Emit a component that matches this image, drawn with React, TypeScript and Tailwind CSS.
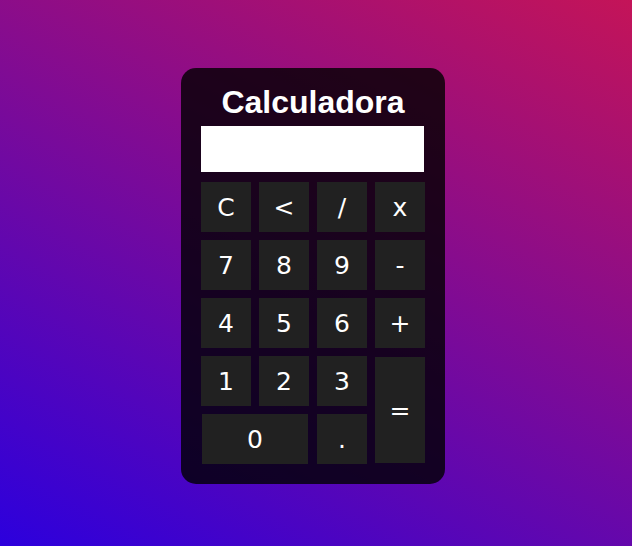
import React, { useState } from "react";

const keys: { label: string; cls?: string }[] = [
  { label: "C" },
  { label: "<" },
  { label: "/" },
  { label: "x" },
  { label: "7" },
  { label: "8" },
  { label: "9" },
  { label: "-" },
  { label: "4" },
  { label: "5" },
  { label: "6" },
  { label: "+" },
  { label: "1" },
  { label: "2" },
  { label: "3" },
  { label: "=", cls: "row-span-2 h-[106px] self-center" },
  { label: "0", cls: "col-span-2 w-[106px] justify-self-center" },
  { label: "." },
];

const App = () => {
  const [value, setValue] = useState("");

  const press = (k: string) => {
    if (k === "C") return setValue("");
    if (k === "<") return setValue((v) => v.slice(0, -1));
    if (k === "=") {
      try {
        // eslint-disable-next-line no-new-func
        const r = Function(`return (${value.replace(/x/g, "*")})`)();
        setValue(String(r));
      } catch {
        setValue("Erro");
      }
      return;
    }
    setValue((v) => v + k);
  };

  return (
    <div className="min-h-screen w-full bg-[linear-gradient(27deg,#2c00dd,#c41458)] flex items-center justify-center pt-[6px] pr-[6px]">
      <div className="w-[264px] rounded-[15px] bg-black/80 px-5 pt-5 pb-5 flex flex-col items-center">
        <h1 className="text-[32px] leading-[28px] font-bold text-white font-['Liberation_Sans',Arial,sans-serif]">
          Calculadora
        </h1>
        <input
          readOnly
          value={value}
          className="mt-[10px] w-[223px] h-[46px] self-start bg-white text-black text-right px-2 text-2xl outline-none border-0 font-['DejaVu_Sans',sans-serif]"
        />
        <div className="mt-[10px] grid grid-cols-[repeat(4,50px)] grid-rows-[repeat(5,50px)] gap-2">
          {keys.map((k) => (
            <button
              key={k.label}
              onClick={() => press(k.label)}
              className={`bg-[#212121] text-white text-[25px] pt-[2px] flex items-center justify-center font-['DejaVu_Sans',sans-serif] ${
                k.cls ?? "w-[50px] h-[50px]"
              }`}
            >
              {k.label}
            </button>
          ))}
        </div>
      </div>
    </div>
  );
};

export default App;
